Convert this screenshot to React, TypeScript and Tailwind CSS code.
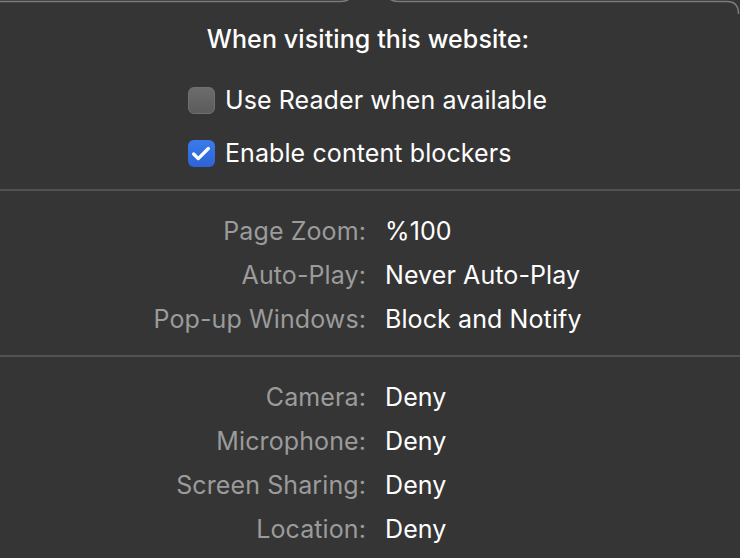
import { Check } from "lucide-react";

const general = [
    { label: "Page Zoom:", value: "%100" },
    { label: "Auto-Play:", value: "Never Auto-Play" },
    { label: "Pop-up Windows:", value: "Block and Notify" },
];

const permissions = [
    { label: "Camera:", value: "Deny" },
    { label: "Microphone:", value: "Deny" },
    { label: "Screen Sharing:", value: "Deny" },
    { label: "Location:", value: "Deny" },
];

function Box({ checked }: { checked: boolean }) {
    if (checked) {
        return (
            <span className="flex h-[27px] w-[27px] shrink-0 items-center justify-center rounded-[6px] bg-gradient-to-b from-[#3a7bec] to-[#2c64d6]">
                <Check className="h-[22px] w-[22px] text-white" strokeWidth={3.6} />
            </span>
        );
    }
    return (
        <span className="h-[27px] w-[27px] shrink-0 rounded-[6px] border border-[#707070] bg-gradient-to-b from-[#6c6c6c] to-[#5c5c5c]" />
    );
}

function Rows({ rows }: { rows: { label: string; value: string }[] }) {
    return (
        <div className="grid grid-cols-[366px_1fr] gap-x-[19px]">
            {rows.map((r) => (
                <div key={r.label} className="contents">
                    <span className="whitespace-nowrap text-right leading-[44px] text-[#9b9b9b]">{r.label}</span>
                    <span className="whitespace-nowrap leading-[44px] text-white">{r.value}</span>
                </div>
            ))}
        </div>
    );
}

export default function App() {
    return (
        <div className="relative h-[558px] w-[740px] overflow-hidden bg-[#353535] font-['Inter','Liberation_Sans',sans-serif] text-[25px] tracking-[0.1px] text-white">
            {/* popover edge with arrow notch */}
            <svg className="absolute left-0 top-0" width="740" height="16" viewBox="0 0 740 16" fill="none">
                <path d="M0 1.5 H340 Q346 1.5 349.5 -1" stroke="#7c7c7c" strokeWidth="1.5" />
                <path d="M389.5 -1 Q393 1.5 399 1.5 H727 Q738.5 1.5 738.5 14" stroke="#7c7c7c" strokeWidth="1.5" />
            </svg>

            <div className="flex flex-col">
                <h1 className="pt-[25px] pr-[4px] text-center font-medium leading-[28px]">When visiting this website:</h1>

                <div className="flex flex-col items-start gap-[26px] self-center pt-[34px] pr-[5px]">
                    <label className="flex items-center gap-[10px] whitespace-nowrap leading-[27px]">
                        <Box checked={false} />
                        Use Reader when available
                    </label>
                    <label className="flex items-center gap-[10px] whitespace-nowrap leading-[27px]">
                        <Box checked={true} />
                        Enable content blockers
                    </label>
                </div>

                <div className="mt-[22px] h-[2px] bg-[#525252]" />

                <div className="pt-[18px] pb-[14px]">
                    <Rows rows={general} />
                </div>

                <div className="h-[2px] bg-[#525252]" />

                <div className="pt-[18px]">
                    <Rows rows={permissions} />
                </div>
            </div>
        </div>
    );
}
